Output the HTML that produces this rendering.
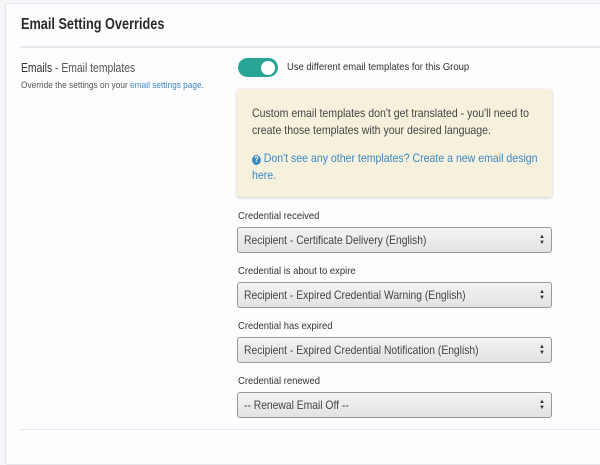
<!DOCTYPE html>
<html><head><style>
body{margin:0;width:600px;height:440px;background:#f6f6f8;font-family:"Liberation Sans",sans-serif;overflow:hidden;position:relative;color:#333}
.card{position:absolute;left:5px;top:3px;width:620px;height:460px;background:#fdfcfe;border:1px solid #e6e6ea;border-radius:3px}
.a{position:absolute;white-space:nowrap;transform-origin:left top}
h1{position:absolute;left:21px;top:16px;margin:0;font-size:15.5px;font-weight:bold;color:#2b2b2b;transform:scaleX(.82);transform-origin:left top;white-space:nowrap}
.hr{position:absolute;left:20px;right:0;height:2px;background:#e8e8ec}
.tog{position:absolute;left:238px;top:58px;width:40px;height:19px;border-radius:10px;background:#2aa595}
.tog:after{content:"";position:absolute;right:3px;top:2.5px;width:14px;height:14px;border-radius:50%;background:#fff}
.note{position:absolute;left:237px;top:89px;width:315px;height:108px;background:#f6f1dc;border-radius:3px;box-shadow:0 1px 3px rgba(0,0,0,.2)}
.lbl{position:absolute;left:238px;font-size:10.5px;color:#333;transform:scaleX(.9);transform-origin:left top;white-space:nowrap}
.sel{position:absolute;left:237px;width:313px;height:24px;border:1px solid #999;border-radius:3px;background:linear-gradient(#f4f4f4,#e2e2e2);font-size:12px;color:#444;box-sizing:content-box}
.sel span{position:absolute;left:6px;top:5px;transform:scaleX(.86);transform-origin:left top;white-space:nowrap}
.sel i{position:absolute;right:6px;top:6px;font-style:normal;font-size:6px;line-height:6px;color:#333}
a{color:#3b88c4;text-decoration:none}
</style></head><body>
<div class="card"></div>
<h1>Email Setting Overrides</h1>
<div class="hr" style="top:46px"></div>
<div class="a" style="left:21px;top:61px;font-size:12.5px;color:#333;transform:scaleX(.83)">Emails <span style="color:#555">- Email templates</span></div>
<div class="a" style="left:21px;top:80px;font-size:9.5px;color:#555;transform:scaleX(.875)">Override the settings on your <a>email settings page</a>.</div>
<div class="tog"></div>
<div class="a" style="left:287px;top:61px;font-size:10.5px;color:#333;transform:scaleX(.9)">Use different email templates for this Group</div>
<div class="note">
<div class="a" style="left:15px;top:16px;font-size:12px;line-height:17px;color:#444;transform:scaleX(.88)">Custom email templates don't get translated - you'll need to<br>create those templates with your desired language.</div>
<div class="a" style="left:15px;top:61px;font-size:12px;line-height:17px;color:#3b88c4;transform:scaleX(.88)"><span style="display:inline-block;width:10px;height:10px;border-radius:50%;background:#3b88c4;color:#fff;font-size:8px;line-height:10px;text-align:center;font-weight:bold;vertical-align:0px">?</span> Don't see any other templates? Create a new email design<br>here.</div>
</div>
<div class="lbl" style="top:210px">Credential received</div>
<div class="sel" style="top:227px"><span>Recipient - Certificate Delivery (English)</span><i>▲<br>▼</i></div>
<div class="lbl" style="top:265px">Credential is about to expire</div>
<div class="sel" style="top:282px"><span>Recipient - Expired Credential Warning (English)</span><i>▲<br>▼</i></div>
<div class="lbl" style="top:320px">Credential has expired</div>
<div class="sel" style="top:337px"><span>Recipient - Expired Credential Notification (English)</span><i>▲<br>▼</i></div>
<div class="lbl" style="top:375px">Credential renewed</div>
<div class="sel" style="top:392px"><span>-- Renewal Email Off --</span><i>▲<br>▼</i></div>
<div class="hr" style="top:429px;height:1px"></div>
</body></html>
